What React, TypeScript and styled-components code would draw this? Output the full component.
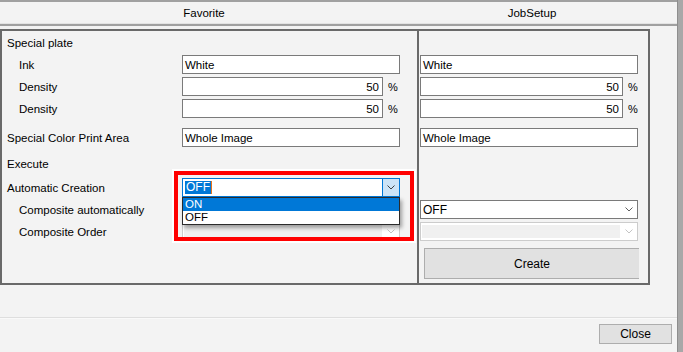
import styled, { createGlobalStyle, css } from "styled-components";

const GlobalStyle = createGlobalStyle`
  *, *::before, *::after { box-sizing: border-box; }
  html, body { margin: 0; padding: 0; background: #f3f3f3; }
  body {
    font-family: "Liberation Sans", Arial, sans-serif;
    font-size: 11.5px;
    color: #000;
  }
`;

const Window = styled.div`
  display: flex;
  width: 683px;
  height: 352px;
  overflow: hidden;
  background: #f3f3f3;
`;

const Main = styled.div`
  flex: 1;
  display: flex;
  flex-direction: column;
`;

const ScrollEdge = styled.div`
  width: 6px;
  background: #a8a8a8;
  border-left: 1px solid #8e8e8e;
`;

const Header = styled.div`
  display: flex;
  height: 26px;
  border-top: 2px solid #a0a0a0;
  border-bottom: 2px solid #a0a0a0;
  box-shadow: inset 0 -1px 0 #e3e3e3;
`;

const HeaderCell = styled.div<{ $width: number }>`
  width: ${(p) => p.$width}px;
  display: flex;
  align-items: center;
  justify-content: center;
  padding-bottom: 1px;
`;

const Body = styled.div`
  padding-top: 3px;
`;

const GridBox = styled.div`
  display: flex;
  width: 650px;
  height: 256px;
  border: 2px solid #696969;
`;

const Panel = styled.div<{ $width?: number; $divided?: boolean }>`
  position: relative;
  display: flex;
  flex-direction: column;
  ${(p) => (p.$width ? `width: ${p.$width}px;` : "flex: 1;")}
  ${(p) => p.$divided && "border-left: 2px solid #696969; padding-left: 1px;"}
`;

const Heading = styled.div<{ $height: number }>`
  height: ${(p) => p.$height}px;
  display: flex;
  align-items: center;
  padding-left: 5px;
  white-space: nowrap;
`;

const FieldRow = styled.div<{ $gap?: number }>`
  display: flex;
  align-items: center;
  height: 19px;
  margin-bottom: ${(p) => p.$gap ?? 3}px;
`;

const Label = styled.div<{ $indent?: boolean }>`
  width: 180px;
  padding-left: ${(p) => (p.$indent ? 17 : 5)}px;
  white-space: nowrap;
`;

const TextBox = styled.div<{ $width: number; $right?: boolean }>`
  width: ${(p) => p.$width}px;
  height: 19px;
  display: flex;
  align-items: center;
  justify-content: ${(p) => (p.$right ? "flex-end" : "flex-start")};
  padding: 0 ${(p) => (p.$right ? 3 : 2)}px 0 2px;
  background: #fff;
  border: 1px solid #7a7a7a;
  white-space: nowrap;
`;

const Percent = styled.span`
  margin-left: 5px;
  font-size: 11px;
`;

type ComboState = "normal" | "focus" | "disabled";

const Combo = styled.div<{ $width: number; $state: ComboState }>`
  position: relative;
  width: ${(p) => p.$width}px;
  height: 19px;
  display: flex;
  align-items: stretch;
  background: #fff;
  border: 1px solid #7a7a7a;
  ${(p) =>
    p.$state === "focus" &&
    css`
      border-color: #0078d7;
    `}
  ${(p) =>
    p.$state === "disabled" &&
    css`
      border-color: #cccccc;
      padding: 2px 0 2px 1px;
    `}
`;

const ComboValue = styled.div<{ $disabled?: boolean }>`
  flex: 1;
  display: flex;
  align-items: center;
  padding-left: 2px;
  font-size: 12px;
  ${(p) => p.$disabled && "background: #f0f0f0;"}
`;

const ComboButton = styled.div<{ $state: ComboState }>`
  width: 17px;
  display: flex;
  align-items: center;
  justify-content: center;
  color: ${(p) => (p.$state === "disabled" ? "#c4c4c4" : "#606060")};
  ${(p) =>
    p.$state === "focus" &&
    css`
      background: #cce4f7;
      border-left: 1px solid #0078d7;
      color: #404040;
    `}
`;

const Selected = styled.span`
  background: #0078d7;
  color: #fff;
  padding: 0 1px;
  line-height: 13px;
`;

const Caret = styled.span`
  width: 1px;
  height: 13px;
  background: #e8731a;
`;

const DropList = styled.div`
  position: absolute;
  left: -1px;
  right: -1px;
  top: 18px;
  z-index: 2;
  background: #fff;
  border: 1px solid #2b2b2b;
  box-shadow: 2px 3px 4px rgba(0, 0, 0, 0.35);
`;

const DropItem = styled.div<{ $active?: boolean }>`
  height: 13px;
  line-height: 13px;
  padding-left: 2px;
  font-size: 11.5px;
  overflow: hidden;
  background: ${(p) => (p.$active ? "#0078d7" : "#fff")};
  color: ${(p) => (p.$active ? "#fff" : "#000")};
`;

const CreateButton = styled.div`
  margin: 7px 0 0 4px;
  width: 215px;
  height: 31px;
  display: flex;
  align-items: center;
  justify-content: center;
  background: #e1e1e1;
  border: 1px solid #adadad;
  border-right: none;
  font-size: 12px;
`;

const Marker = styled.div`
  position: absolute;
  left: 172px;
  top: 140px;
  width: 240px;
  height: 70px;
  z-index: 3;
  border: 4px solid #ff0000;
  outline: 2px solid #fff;
  pointer-events: none;
`;

const Separator = styled.div`
  margin-top: 32px;
  height: 2px;
  border-top: 1px solid #dedede;
  border-bottom: 1px solid #f9f9f9;
`;

const Footer = styled.div`
  display: flex;
  justify-content: flex-end;
  padding: 5px 5px 0 0;
`;

const CloseButton = styled.div`
  width: 73px;
  height: 20px;
  display: flex;
  align-items: center;
  justify-content: center;
  background: #e1e1e1;
  border: 1px solid #adadad;
  font-size: 12px;
`;

function Chevron() {
  return (
    <svg width="8" height="5" viewBox="0 0 8 5">
      <polyline points="0.5,0.5 4,4 7.5,0.5" fill="none" stroke="currentColor" strokeWidth="1" />
    </svg>
  );
}

function ComboBox({ width, state, value }: { width: number; state: ComboState; value?: string }) {
  return (
    <Combo $width={width} $state={state}>
      <ComboValue $disabled={state === "disabled"}>{value}</ComboValue>
      <ComboButton $state={state}>
        <Chevron />
      </ComboButton>
    </Combo>
  );
}

export default function App() {
  return (
    <>
      <GlobalStyle />
      <Window>
        <Main>
          <Header>
            <HeaderCell $width={408}>Favorite</HeaderCell>
            <HeaderCell $width={248}>JobSetup</HeaderCell>
          </Header>
          <Body>
            <GridBox>
              <Panel $width={415}>
                <Heading $height={24}>Special plate</Heading>
                <FieldRow>
                  <Label $indent>Ink</Label>
                  <TextBox $width={218}>White</TextBox>
                </FieldRow>
                <FieldRow>
                  <Label $indent>Density</Label>
                  <TextBox $width={201} $right>50</TextBox>
                  <Percent>%</Percent>
                </FieldRow>
                <FieldRow $gap={10}>
                  <Label $indent>Density</Label>
                  <TextBox $width={201} $right>50</TextBox>
                  <Percent>%</Percent>
                </FieldRow>
                <FieldRow>
                  <Label>Special Color Print Area</Label>
                  <TextBox $width={218}>Whole Image</TextBox>
                </FieldRow>
                <Heading $height={28}>Execute</Heading>
                <FieldRow>
                  <Label>Automatic Creation</Label>
                  <Combo $width={218} $state="focus">
                    <ComboValue>
                      <Selected>OFF</Selected>
                      <Caret />
                    </ComboValue>
                    <ComboButton $state="focus">
                      <Chevron />
                    </ComboButton>
                    <DropList>
                      <DropItem $active>ON</DropItem>
                      <DropItem>OFF</DropItem>
                    </DropList>
                  </Combo>
                </FieldRow>
                <FieldRow>
                  <Label $indent>Composite automatically</Label>
                  <ComboBox width={218} state="normal" />
                </FieldRow>
                <FieldRow>
                  <Label $indent>Composite Order</Label>
                  <ComboBox width={218} state="disabled" />
                </FieldRow>
                <Marker />
              </Panel>
              <Panel $divided>
                <Heading $height={24} />
                <FieldRow>
                  <TextBox $width={218}>White</TextBox>
                </FieldRow>
                <FieldRow>
                  <TextBox $width={203} $right>50</TextBox>
                  <Percent>%</Percent>
                </FieldRow>
                <FieldRow $gap={10}>
                  <TextBox $width={203} $right>50</TextBox>
                  <Percent>%</Percent>
                </FieldRow>
                <FieldRow>
                  <TextBox $width={218}>Whole Image</TextBox>
                </FieldRow>
                <Heading $height={28} />
                <FieldRow />
                <FieldRow>
                  <ComboBox width={218} state="normal" value="OFF" />
                </FieldRow>
                <FieldRow $gap={0}>
                  <ComboBox width={218} state="disabled" />
                </FieldRow>
                <CreateButton>Create</CreateButton>
              </Panel>
            </GridBox>
          </Body>
          <Separator />
          <Footer>
            <CloseButton>Close</CloseButton>
          </Footer>
        </Main>
        <ScrollEdge />
      </Window>
    </>
  );
}
